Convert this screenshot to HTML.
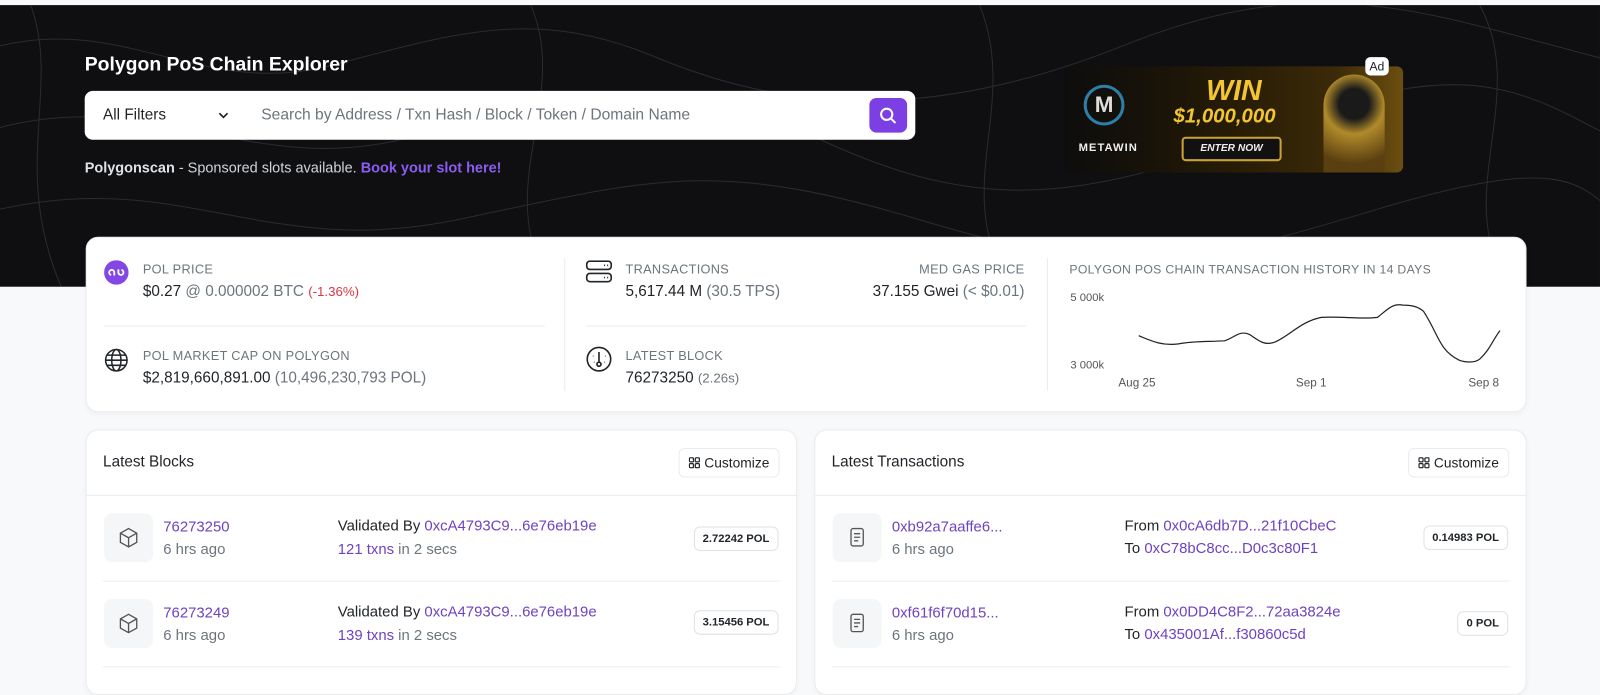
<!DOCTYPE html>
<html><head><meta charset="utf-8"><style>
*{box-sizing:border-box;margin:0;padding:0}
body{width:1600px;height:669px;overflow:hidden;background:#f8f9fb;font-family:"Liberation Sans",sans-serif;color:#212529;position:relative}
#w{position:absolute;left:0;top:0;width:1568px;height:656px;transform:scale(1.0204);transform-origin:0 0}
.hdr{position:absolute;left:0;top:5px;width:1568px;height:276px;background:#0f0f12;overflow:hidden}
.abs{position:absolute}
.card{position:absolute;background:#fff;border:1px solid #e9ecef;border-radius:12px;box-shadow:0 2px 6px rgba(0,0,0,.04)}
.lbl{font-size:12.5px;color:#6c757d;letter-spacing:.3px}
.val{font-size:15px;color:#212529}
.mut{color:#6c757d}
.lnk{color:#6f42c1}
.ico{position:absolute;width:48px;height:48px;background:#f5f6f8;border-radius:8px}
.badge{position:absolute;border:1px solid #dee2e6;border-radius:6px;font-size:11px;font-weight:bold;height:24px;line-height:22px;padding:0 8px;color:#212529}
.cust{position:absolute;border:1px solid #e9ecef;border-radius:6px;height:29px;line-height:27px;padding:0 9px 0 9px;font-size:13.5px;color:#212529}
.row{position:absolute;left:16px;right:16px;border-top:1px solid #e9ecef}
.t14{font-size:14.6px}
</style></head><body><div id="w">
<div class="hdr">
<svg width="1568" height="276" style="position:absolute;left:0;top:0" fill="none" stroke="#2a2a30" stroke-width="1">
<path d="M0 40 C120 10 200 90 320 60 S520 0 640 50 S900 120 1100 40 S1400 10 1600 60"/>
<path d="M0 120 C150 80 250 170 400 130 S650 60 800 130 S1050 200 1250 120 S1500 90 1600 140"/>
<path d="M0 200 C180 160 260 250 450 210 S700 150 900 210 S1150 260 1350 200 S1550 180 1600 220"/>
<path d="M30 0 C60 80 10 160 60 276"/><path d="M520 0 C560 90 480 180 540 276"/><path d="M960 0 C1000 100 930 180 990 276"/><path d="M1450 0 C1500 90 1420 190 1480 276"/>
</svg>
</div>
<div class="abs" style="left:83px;top:53px;font-size:19px;font-weight:bold;color:#fff">Polygon PoS Chain Explorer</div>
<div class="abs" style="left:83px;top:89px;width:814px;height:48px;background:#fff;border-radius:8px">
 <div class="abs" style="left:18px;top:15px;font-size:15px;color:#212529">All Filters</div>
 <svg class="abs" style="left:130px;top:19px" width="12" height="10" viewBox="0 0 12 10"><path d="M2 3 L6 7 L10 3" stroke="#212529" stroke-width="1.6" fill="none"/></svg>
 <div class="abs" style="left:173px;top:15px;font-size:15.3px;color:#6c757d">Search by Address / Txn Hash / Block / Token / Domain Name</div>
 <div class="abs" style="left:769px;top:7px;width:37px;height:34px;background:#7b3fe4;border-radius:7px">
  <svg width="37" height="34" viewBox="0 0 37 34"><circle cx="17" cy="16" r="5.5" stroke="#fff" stroke-width="2" fill="none"/><path d="M21 20 L25 24" stroke="#fff" stroke-width="2" stroke-linecap="round"/></svg>
 </div>
</div>
<div class="abs" style="left:83px;top:157px;font-size:14.2px;color:#ced4da"><b style="color:#dee2e6">Polygonscan</b> - Sponsored slots available. <b style="color:#8c5cf0">Book your slot here!</b></div>
<!-- ad -->
<div class="abs" style="left:1042px;top:65px;width:333px;height:104px;border-radius:6px;background:linear-gradient(90deg,#0d0d0d 0%,#1a1408 30%,#2a1e06 55%,#3b2a08 80%,#6b4e10 100%);overflow:hidden">
 <div class="abs" style="left:20px;top:18px;width:40px;height:40px;border-radius:50%;border:3px solid #2d7fa8;color:#ddd;font-weight:bold;font-size:22px;text-align:center;line-height:34px">M</div>
 <div class="abs" style="left:15px;top:74px;color:#eee;font-size:11px;font-weight:bold;letter-spacing:1px">METAWIN</div>
 <div class="abs" style="left:140px;top:10px;color:#f3c531;font-size:28px;font-weight:900;font-style:italic;line-height:28px">WIN</div>
 <div class="abs" style="left:108px;top:38px;color:#f3c531;font-size:20px;font-weight:900;font-style:italic">$1,000,000</div>
 <div class="abs" style="left:116px;top:69px;width:98px;height:24px;border:2px solid #c9a23a;border-radius:4px;color:#eee;font-size:10px;font-weight:bold;font-style:italic;text-align:center;line-height:20px;background:#111">ENTER NOW</div>
 <div class="abs" style="left:255px;top:8px;width:60px;height:96px;border-radius:30px 30px 0 0;background:radial-gradient(circle at 50% 30%,#1a1a1a 20%,#b08a2a 40%,#5a3f10 80%)"></div>
</div>
<div class="abs" style="left:1338px;top:56px;background:#fff;border-radius:5px;font-size:12px;padding:2px 4px;color:#212529">Ad</div>
<!-- stats -->
<div class="card" style="left:84px;top:232px;width:1412px;height:172px">
 <svg class="abs" style="left:17px;top:22px" width="24" height="24" viewBox="0 0 24 24"><circle cx="12" cy="12" r="12" fill="#8247e5"/><path d="M7 14.5 a2.5 2.5 0 1 1 3-2.5 l0 3 M17 9.5 a2.5 2.5 0 1 1 -3 2.5 l0 -3" stroke="#fff" stroke-width="1.8" fill="none"/></svg>
 <div class="abs lbl" style="left:55px;top:24px">POL PRICE</div>
 <div class="abs val" style="left:55px;top:44px">$0.27 <span class="mut">@ 0.000002 BTC</span> <span style="color:#dc3545;font-size:13px">(-1.36%)</span></div>
 <div class="abs" style="left:17px;top:86px;width:432px;border-top:1px solid #e9ecef"></div>
 <svg class="abs" style="left:17px;top:108px" width="24" height="24" viewBox="0 0 24 24" fill="none" stroke="#212529" stroke-width="1.5"><circle cx="12" cy="12" r="10.5"/><ellipse cx="12" cy="12" rx="4.5" ry="10.5"/><path d="M1.5 12h21M3 7h18M3 17h18"/></svg>
 <div class="abs lbl" style="left:55px;top:109px">POL MARKET CAP ON POLYGON</div>
 <div class="abs val" style="left:55px;top:129px">$2,819,660,891.00 <span class="mut">(10,496,230,793 POL)</span></div>
 <div class="abs" style="left:468px;top:20px;height:130px;border-left:1px solid #e9ecef"></div>
 <svg class="abs" style="left:489px;top:22px" width="26" height="24" viewBox="0 0 26 24" fill="none" stroke="#212529" stroke-width="1.6"><rect x="1" y="1" width="24" height="8" rx="3"/><rect x="1" y="13" width="24" height="8" rx="3"/><path d="M18 5h1M21 5h1M18 17h1M21 17h1"/></svg>
 <div class="abs lbl" style="left:528px;top:24px">TRANSACTIONS</div>
 <div class="abs val" style="left:528px;top:44px">5,617.44 M <span class="mut">(30.5 TPS)</span></div>
 <div class="abs lbl" style="right:491px;top:24px">MED GAS PRICE</div>
 <div class="abs val" style="right:491px;top:44px">37.155 Gwei <span class="mut">(&lt; $0.01)</span></div>
 <div class="abs" style="left:489px;top:86px;width:432px;border-top:1px solid #e9ecef"></div>
 <svg class="abs" style="left:489px;top:106px" width="26" height="26" viewBox="0 0 26 26" fill="none" stroke="#212529" stroke-width="1.6"><circle cx="13" cy="13" r="11.5"/><path d="M13 6v10"/><circle cx="13" cy="18" r="2"/><path d="M7 10h.5M19 10h.5M8 16h.5M18 16h.5"/></svg>
 <div class="abs lbl" style="left:528px;top:109px">LATEST BLOCK</div>
 <div class="abs val" style="left:528px;top:129px">76273250 <span class="mut" style="font-size:13px">(2.26s)</span></div>
 <div class="abs" style="left:941px;top:20px;height:130px;border-left:1px solid #e9ecef"></div>
 <div class="abs lbl" style="left:963px;top:24px;font-size:12px">POLYGON POS CHAIN TRANSACTION HISTORY IN 14 DAYS</div>
 <div class="abs" style="left:964px;top:53px;font-size:11px;color:#555">5 000k</div>
 <div class="abs" style="left:964px;top:119px;font-size:11px;color:#555">3 000k</div>
 <div class="abs" style="left:1011px;top:137px;font-size:11.5px;color:#555">Aug 25</div>
 <div class="abs" style="left:1185px;top:137px;font-size:11.5px;color:#555">Sep 1</div>
 <div class="abs" style="left:1354px;top:137px;font-size:11.5px;color:#555">Sep 8</div>
 <svg class="abs" style="left:0;top:0" width="1412" height="172" fill="none" stroke="#222" stroke-width="1.2"><path d="M1031 96 C1045 102 1055 106 1070 104 C1085 101 1100 102 1115 101 C1125 98 1130 90 1140 95 C1150 102 1155 106 1165 102 C1180 95 1190 82 1210 78 C1230 77 1250 80 1265 78 C1275 70 1280 64 1290 66 C1300 66 1305 68 1310 72 C1325 95 1325 110 1345 120 C1350 122 1360 123 1365 119 C1375 110 1378 100 1385 91"/></svg>
</div>
<!-- blocks -->
<div class="card" style="left:84px;top:421px;width:697px;height:260px">
 <div class="abs" style="left:16px;top:22px;font-size:15px;color:#212529">Latest Blocks</div>
 <div class="cust" style="right:16px;top:17px"><svg width="11" height="11" viewBox="0 0 11 11" style="vertical-align:-1px" fill="none" stroke="#212529" stroke-width="1.2"><rect x=".6" y=".6" width="4" height="4" rx="1"/><rect x="6.4" y=".6" width="4" height="4" rx="1"/><rect x=".6" y="6.4" width="4" height="4" rx="1"/><rect x="6.4" y="6.4" width="4" height="4" rx="1"/></svg> Customize</div>
 <div class="row" style="top:63px;left:0;right:0"></div>
 <div class="ico" style="left:17px;top:81px"><svg width="48" height="48" viewBox="0 0 48 48" fill="none" stroke="#555" stroke-width="1.3"><path d="M24 15 L32 19.5 V28.5 L24 33 L16 28.5 V19.5 Z M16 19.5 L24 24 L32 19.5 M24 24 V33"/></svg></div>
 <div class="abs t14 lnk" style="left:75px;top:87px">76273250</div>
 <div class="abs t14 mut" style="left:75px;top:109px">6 hrs ago</div>
 <div class="abs t14" style="left:246px;top:86px">Validated By <span class="lnk">0xcA4793C9...6e76eb19e</span></div>
 <div class="abs t14 mut" style="left:246px;top:109px"><span class="lnk">121 txns</span> in 2 secs</div>
 <div class="badge" style="right:17px;top:94px">2.72242 POL</div>
 <div class="row" style="top:147px"></div>
 <div class="ico" style="left:17px;top:165px"><svg width="48" height="48" viewBox="0 0 48 48" fill="none" stroke="#555" stroke-width="1.3"><path d="M24 15 L32 19.5 V28.5 L24 33 L16 28.5 V19.5 Z M16 19.5 L24 24 L32 19.5 M24 24 V33"/></svg></div>
 <div class="abs t14 lnk" style="left:75px;top:171px">76273249</div>
 <div class="abs t14 mut" style="left:75px;top:193px">6 hrs ago</div>
 <div class="abs t14" style="left:246px;top:170px">Validated By <span class="lnk">0xcA4793C9...6e76eb19e</span></div>
 <div class="abs t14 mut" style="left:246px;top:193px"><span class="lnk">139 txns</span> in 2 secs</div>
 <div class="badge" style="right:17px;top:176px">3.15456 POL</div>
 <div class="row" style="top:231px"></div>
</div>
<!-- txns -->
<div class="card" style="left:798px;top:421px;width:698px;height:260px">
 <div class="abs" style="left:16px;top:22px;font-size:15px;color:#212529">Latest Transactions</div>
 <div class="cust" style="right:16px;top:17px"><svg width="11" height="11" viewBox="0 0 11 11" style="vertical-align:-1px" fill="none" stroke="#212529" stroke-width="1.2"><rect x=".6" y=".6" width="4" height="4" rx="1"/><rect x="6.4" y=".6" width="4" height="4" rx="1"/><rect x=".6" y="6.4" width="4" height="4" rx="1"/><rect x="6.4" y="6.4" width="4" height="4" rx="1"/></svg> Customize</div>
 <div class="row" style="top:63px;left:0;right:0"></div>
 <div class="ico" style="left:17px;top:81px"><svg width="48" height="48" viewBox="0 0 48 48" fill="none" stroke="#555" stroke-width="1.3"><rect x="18" y="15" width="12" height="17" rx="2"/><path d="M21 20h6M21 23.5h6M21 27h4"/></svg></div>
 <div class="abs t14 lnk" style="left:75px;top:87px">0xb92a7aaffe6...</div>
 <div class="abs t14 mut" style="left:75px;top:109px">6 hrs ago</div>
 <div class="abs t14" style="left:303px;top:86px">From <span class="lnk">0x0cA6db7D...21f10CbeC</span></div>
 <div class="abs t14" style="left:303px;top:108px">To <span class="lnk">0xC78bC8cc...D0c3c80F1</span></div>
 <div class="badge" style="right:17px;top:93px">0.14983 POL</div>
 <div class="row" style="top:147px"></div>
 <div class="ico" style="left:17px;top:165px"><svg width="48" height="48" viewBox="0 0 48 48" fill="none" stroke="#555" stroke-width="1.3"><rect x="18" y="15" width="12" height="17" rx="2"/><path d="M21 20h6M21 23.5h6M21 27h4"/></svg></div>
 <div class="abs t14 lnk" style="left:75px;top:171px">0xf61f6f70d15...</div>
 <div class="abs t14 mut" style="left:75px;top:193px">6 hrs ago</div>
 <div class="abs t14" style="left:303px;top:170px">From <span class="lnk">0x0DD4C8F2...72aa3824e</span></div>
 <div class="abs t14" style="left:303px;top:192px">To <span class="lnk">0x435001Af...f30860c5d</span></div>
 <div class="badge" style="right:17px;top:177px">0 POL</div>
 <div class="row" style="top:231px"></div>
</div>
</div></body></html>
